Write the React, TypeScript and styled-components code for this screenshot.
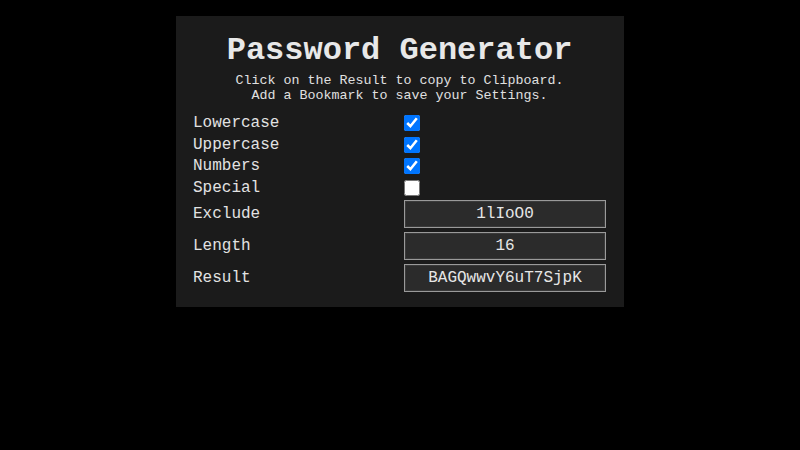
import React, { useState } from "react";
import styled, { createGlobalStyle } from "styled-components";

const Global = createGlobalStyle`
  html, body { margin: 0; padding: 0; background: #000; }
  body { font-family: "Liberation Mono", "DejaVu Sans Mono", monospace; color: #e6e6e6; }
`;

const Page = styled.div`
  display: flex;
  justify-content: center;
  padding-top: 16px;
`;

const Panel = styled.div`
  width: 448px;
  box-sizing: border-box;
  background: #1b1b1b;
  padding: 16px 18px 15px 17px;
`;

const Title = styled.h1`
  margin: 0;
  font-size: 32px;
  font-weight: bold;
  text-align: center;
  line-height: 37px;
  color: #e8e8e8;
`;

const Subtitle = styled.p`
  margin: 4px 0 11px;
  font-size: 13.33px;
  line-height: 15px;
  text-align: center;
  color: #e0e0e0;
`;

const Grid = styled.div`
  display: grid;
  grid-template-columns: 211px 202px;
  row-gap: 3.6px;
  align-items: center;
`;

const Label = styled.label`
  font-size: 16px;
  line-height: 18px;
  color: #e2e2e2;
`;

const Cell = styled.div<{ $tall?: boolean }>`
  display: flex;
  align-items: center;
  height: ${(p) => (p.$tall ? "28px" : "18px")};
`;

const Check = styled.input`
  width: 16px;
  height: 16px;
  margin: 0;
`;

const Field = styled.input`
  box-sizing: border-box;
  width: 202px;
  height: 28px;
  margin: 0;
  background: #2b2b2b;
  border: 1px solid #9a9a9a;
  outline: 1px solid #3a3a3a;
  outline-offset: -2px;
  color: #e6e6e6;
  font-family: "Liberation Mono", monospace;
  font-size: 16px;
  text-align: center;
  padding: 0;
`;

export default function App() {
  const [opts, setOpts] = useState({ lower: true, upper: true, numbers: true, special: false });
  const boxes: [keyof typeof opts, string][] = [
    ["lower", "Lowercase"],
    ["upper", "Uppercase"],
    ["numbers", "Numbers"],
    ["special", "Special"],
  ];
  const fields: [string, string][] = [
    ["Exclude", "1lIoO0"],
    ["Length", "16"],
    ["Result", "BAGQwwvY6uT7SjpK"],
  ];
  return (
    <>
      <Global />
      <Page>
        <Panel>
          <Title>Password Generator</Title>
          <Subtitle>
            Click on the Result to copy to Clipboard.
            <br />
            Add a Bookmark to save your Settings.
          </Subtitle>
          <Grid>
            {boxes.map(([k, l]) => (
              <React.Fragment key={k}>
                <Label>{l}</Label>
                <Cell>
                  <Check
                    type="checkbox"
                    checked={opts[k]}
                    onChange={() => setOpts({ ...opts, [k]: !opts[k] })}
                  />
                </Cell>
              </React.Fragment>
            ))}
            {fields.map(([l, v]) => (
              <React.Fragment key={l}>
                <Label>{l}</Label>
                <Cell $tall>
                  <Field defaultValue={v} readOnly={l === "Result"} />
                </Cell>
              </React.Fragment>
            ))}
          </Grid>
        </Panel>
      </Page>
    </>
  );
}
